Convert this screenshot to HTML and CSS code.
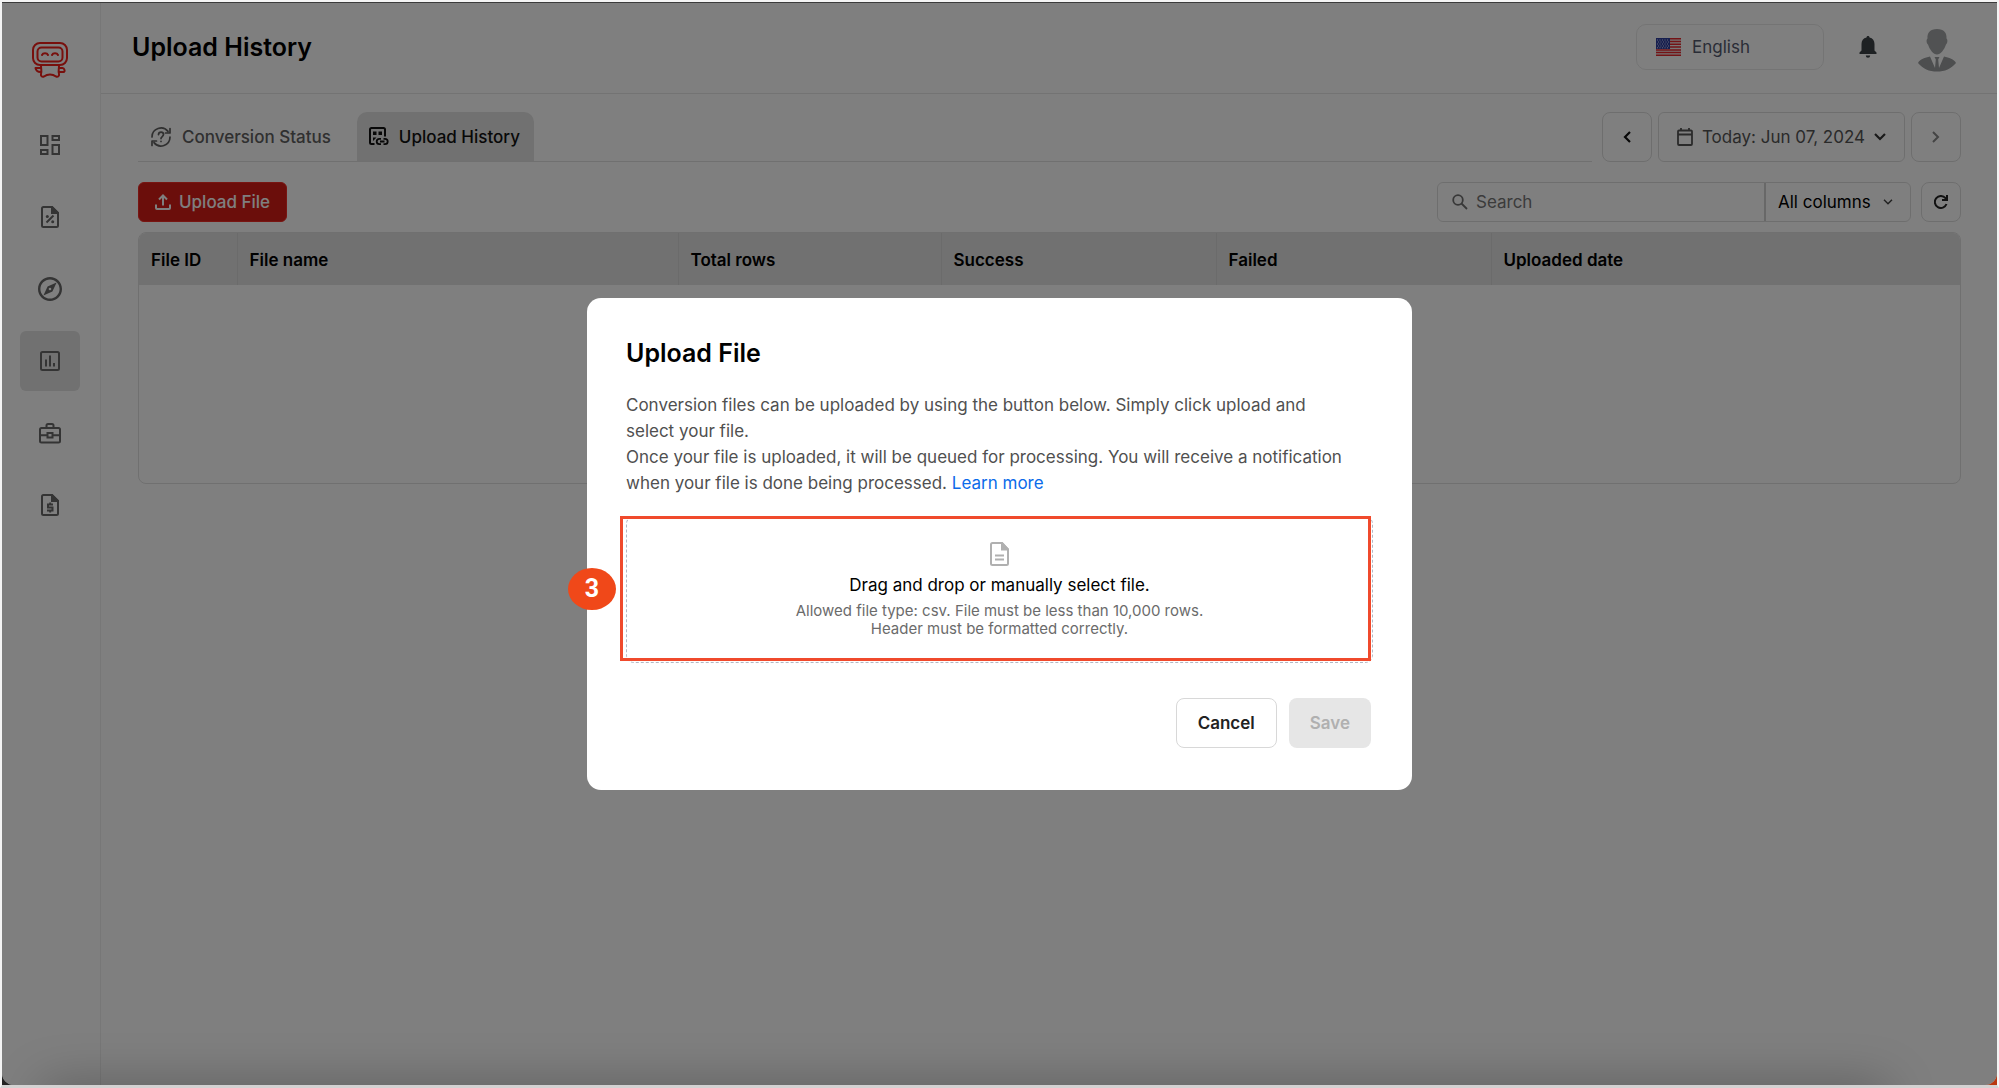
FILE: index.html
```html
<!DOCTYPE html>
<html lang="en">
<head>
<meta charset="utf-8">
<title>Upload History</title>
<link rel="stylesheet" href="styles.css">
</head>
<body>
<div class="frame">
<div class="app">
  <nav class="sidebar" aria-label="Main">
    <a class="logo" href="#" aria-label="Home">
      <svg width="36" height="36" viewBox="0 0 36 36" fill="none" stroke="currentColor" stroke-width="2" stroke-linejoin="round" stroke-linecap="round">
        <rect x="1" y="1" width="34" height="22" rx="7"/><rect x="5.500" y="5.500" width="25" height="14" rx="4"/>
        <path d="M10 13c1-2.300 5-2.300 6 0M20 13c1-2.300 5-2.300 6 0M9 23.500c0 4 1 6 0 8.500-.5 2 1 3 3 2.500 2-1.500 3-2 6-2s4 .5 6 2c2 .5 3.500-.5 3-2.500-1-2.500 0-4.500 0-8.500M8.500 26H3.500c.5 2.500 2 4 5 4M27.500 26l3 0c2 0 3 4 1 4h-4"/>
      </svg>
    </a>
    <a class="nav-item" href="#" aria-label="Dashboard"><svg width="20" height="20" viewBox="0 0 20 20" fill="none" stroke="currentColor" stroke-width="2"><path d="M1 1h6.500v9H1zM12.500 1H19v4h-6.500zM12.500 10H19v9h-6.500zM1 15h6.500v4H1z"/></svg></a>
    <a class="nav-item" href="#" aria-label="Offers"><svg width="18" height="22" viewBox="0 0 18 22" fill="none" stroke="currentColor" stroke-width="2"><path d="M2.500 1H11l6 6v12.500a1.500 1.500 0 0 1-1.500 1.500h-13A1.500 1.500 0 0 1 1 19.500v-17A1.500 1.500 0 0 1 2.500 1z"/><path d="M11 1v6h6z" fill="currentColor"/><path d="M5.500 16.500l7-7"/><circle cx="6.300" cy="10.500" r="1.500" fill="currentColor" stroke="none"/><circle cx="11.700" cy="15.700" r="1.500" fill="currentColor" stroke="none"/></svg></a>
    <a class="nav-item" href="#" aria-label="Explore"><svg width="24" height="24" viewBox="0 0 24 24" fill="currentColor"><path d="M12 2c-5.520 0-10 4.480-10 10s4.480 10 10 10 10-4.480 10-10S17.520 2 12 2zm0 18c-4.410 0-8-3.590-8-8s3.590-8 8-8 8 3.590 8 8-3.590 8-8 8zM6.500 17.500l7.510-3.490L17.500 6.500 9.990 9.990 6.500 17.500zM12 10.900a1.100 1.100 0 1 1 0 2.200 1.100 1.100 0 0 1 0-2.200z" transform="translate(-2.400 -2.400) scale(1.200)"/></svg></a>
    <a class="nav-item active" href="#" aria-label="Reports" aria-current="page"><svg width="20" height="20" viewBox="0 0 20 20" fill="none" stroke="currentColor" stroke-width="2"><rect x="1" y="1" width="18" height="18" rx="1.500"/><path d="M6 8.500v7M10 4.500v11M14 12v3.500"/></svg></a>
    <a class="nav-item" href="#" aria-label="Tools"><svg width="22" height="22" viewBox="0 0 22 22" fill="none" stroke="currentColor" stroke-width="2"><rect x="1" y="6" width="20" height="14.500" rx="1.500"/><path d="M7.500 6V3.500C7.500 2.500 8 2 9 2h4c1 0 1.500.5 1.500 1.500V6M1 13.300h7.500M13.500 13.300H21M8.500 11h5v4.500h-5z"/></svg></a>
    <a class="nav-item" href="#" aria-label="Billing"><svg width="18" height="22" viewBox="0 0 18 22" fill="none" stroke="currentColor" stroke-width="2"><path d="M2.500 1H11l6 6v12.500a1.500 1.500 0 0 1-1.500 1.500h-13A1.500 1.500 0 0 1 1 19.500v-17A1.500 1.500 0 0 1 2.500 1z"/><path d="M11 1v6h6z" fill="currentColor"/><path d="M12 10.500H7v3h4.500v3H6M9.200 8.500v2M9.200 16.500v2"/></svg></a>
  </nav>

  <div class="main">
    <header class="topbar">
      <h1 class="page-title">Upload History</h1>
      <button class="language" type="button">
        <svg width="25" height="18" viewBox="0 0 25 18"><path fill="#eee" d="M0 0h25v18H0z"/><path stroke="#e8262d" stroke-width="1.500" d="M0 .7h25M0 3.500h25M0 6.300h25M0 9.100h25M0 11.900h25M0 14.600h25M0 17.300h25"/><path fill="#2f3f9e" d="M0 0h14v11H0z"/><path stroke="#cdd3ee" stroke-width="1" stroke-dasharray="1 1.500" d="M1 2h12M2 4h11M1 6h12M2 8h11M1 9.800h12"/></svg>
        English
      </button>
      <button class="bare bell" type="button" aria-label="Notifications"><svg width="18" height="22" viewBox="0 0 18 22" fill="currentColor"><path d="M9 0c1 0 1.500.7 1.500 1.600C13.800 2.300 15.500 5 15.500 8v6.500l2 2V18H.5v-1.500l2-2V8c0-3 1.700-5.700 5-6.400C7.500.7 8 0 9 0zM6.800 19.500h4.400a2.200 2.200 0 0 1-4.400 0z"/></svg></button>
      <button class="bare avatar" type="button" aria-label="Account"><svg width="40" height="44" viewBox="0 0 40 44"><path fill="#a3a5a7" d="M20 1c7 0 10 4 9.500 9.500 1.500 1 1 5-.5 6-1.500 5-5.500 10-9 10s-7.500-5-9-10c-1.500-1-2-5-.5-6C10 5 13 1 20 1z"/><path fill="#9a9c9e" d="M13 28.500L18 40l.8-8.500L17.500 29h5l-1.300 2.500L22 40l5-11.500c5 1 10 2.500 12 6.500-5 6-11 8.500-19 8.500S6 41 1 35c2-4 7-5.500 12-6.500z"/></svg></button>
    </header>

    <main class="content">
      <div class="tab-row">
        <div class="tabs" role="tablist">
          <button class="tab" type="button" role="tab" aria-selected="false">
            <svg width="22" height="22" viewBox="0 0 22 22" fill="none" stroke="currentColor" stroke-width="1.700" stroke-linecap="round" stroke-linejoin="round"><path d="M2 11a9 9 0 0 1 16-5.600M20 11a9 9 0 0 1-16 5.600M20 2.500v4.500h-4.500M2 19.500V15h4.500M8.500 8.600c.2-3.200 5-3.200 5 0 0 1.900-2.500 2-2.500 4M11 15.300v.2"/></svg>
            Conversion Status
          </button>
          <button class="tab selected" type="button" role="tab" aria-selected="true">
            <svg width="20" height="20" viewBox="0 0 20 20" fill="none" stroke="currentColor" stroke-width="2"><path d="M5.500 17H2.500A1.500 1.500 0 0 1 1 15.500v-13A1.500 1.500 0 0 1 2.500 1h12A1.500 1.500 0 0 1 16 2.500V9.500"/><path fill="currentColor" stroke="none" d="M4 4.500h3.500V8H4zM9.500 4.500H13V8H9.500zM4 10.500h3.500L4 14z"/><path d="M12 11.800h-1.600a2.700 2.700 0 0 0 0 5.400H12M14.500 11.800H16a2.700 2.700 0 0 1 0 5.400h-1.500M11 14.500h4.500" stroke-width="1.800"/></svg>
            Upload History
          </button>
        </div>
        <div class="date-nav">
          <button class="box step" type="button" aria-label="Previous day"><svg width="8" height="12" viewBox="0 0 8 12" fill="none" stroke="#111" stroke-width="2.200"><path d="M7 1L2 6l5 5"/></svg></button>
          <button class="box date" type="button">
            <svg width="16" height="18" viewBox="0 0 16 18" fill="none" stroke="currentColor" stroke-width="1.800"><rect x="1" y="2.500" width="14" height="14.500" rx="1"/><path d="M1 6.500h14M4 0v3M12 0v3"/></svg>
            Today: Jun 07, 2024
            <svg width="12" height="8" viewBox="0 0 12 8" fill="none" stroke="#333" stroke-width="2.200"><path d="M1 1l5 5 5-5"/></svg>
          </button>
          <button class="box step" type="button" aria-label="Next day"><svg width="8" height="12" viewBox="0 0 8 12" fill="none" stroke="#888" stroke-width="2"><path d="M1 1l5 5-5 5"/></svg></button>
        </div>
      </div>

      <div class="toolbar">
        <button class="upload" type="button">
          <svg width="16" height="16" viewBox="0 0 16 16" fill="none" stroke="currentColor" stroke-width="2"><path d="M8 11.500V2M4 5.500l4-4 4 4M1 10.500V14a1 1 0 0 0 1 1h12a1 1 0 0 0 1-1v-3.500"/></svg>
          Upload File
        </button>
        <div class="filters">
          <div class="search-group">
            <label class="search">
              <svg width="16" height="16" viewBox="0 0 16 16" fill="none" stroke="currentColor" stroke-width="1.800"><circle cx="6" cy="6" r="4.800"/><path d="M9.500 9.500l5.500 5.500"/></svg>
              <input type="text" placeholder="Search" aria-label="Search">
            </label>
            <label class="columns">
              <select aria-label="Columns to search"><option>All columns</option></select>
              <svg width="10" height="6" viewBox="0 0 10 6" fill="none" stroke="#444" stroke-width="1.500"><path d="M1 .8l4 4 4-4"/></svg>
            </label>
          </div>
          <button class="box refresh" type="button" aria-label="Refresh"><svg width="14" height="14" viewBox="0 0 14 14" fill="none" stroke="#222" stroke-width="2"><path d="M12.500 9A6 6 0 1 1 11.500 3.200l1.300 1.600M13 0v5H8"/></svg></button>
        </div>
      </div>

      <div class="table-card">
        <table class="files">
          <colgroup><col class="c-id"><col class="c-name"><col class="c-total"><col class="c-count"><col class="c-count"><col></colgroup>
          <thead><tr><th>File ID</th><th>File name</th><th>Total rows</th><th>Success</th><th>Failed</th><th>Uploaded date</th></tr></thead>
        </table>
      </div>
    </main>
  </div>
</div>

<div class="scrim">
  <section class="dialog" role="dialog" aria-modal="true" aria-labelledby="dialog-title">
    <h2 class="dialog-title" id="dialog-title">Upload File</h2>
    <p class="dialog-text">Conversion files can be uploaded by using the button below. Simply click upload and select your file.<br>Once your file is uploaded, it will be queued for processing. You will receive a notification when your file is done being processed. <a href="#">Learn more</a></p>
    <div class="drop-area">
      <button class="dropzone" type="button">
        <svg width="19" height="24" viewBox="0 0 19 24" fill="none" stroke="#b0b0b0" stroke-width="2"><path d="M2.500 1H12l6 6.500v14a1.500 1.500 0 0 1-1.500 1.500h-14A1.500 1.500 0 0 1 1 21.500v-19A1.500 1.500 0 0 1 2.500 1z"/><path d="M12 1v6.500h6z" fill="#b0b0b0"/><path d="M5 13.500h9M5 17.500h9"/></svg>
        <span class="drop-title">Drag and drop or manually select file.</span>
        <span class="drop-hint">Allowed file type: csv. File must be less than 10,000 rows.<br>Header must be formatted correctly.</span>
      </button>
      <div class="marker"></div>
      <div class="step-number">3</div>
    </div>
    <div class="actions">
      <button class="cancel" type="button">Cancel</button>
      <button class="save" type="button" disabled>Save</button>
    </div>
  </section>
</div>
</div>
</body>
</html>
```
FILE: styles.css
```css
* { box-sizing: border-box; }
body { margin: 0; background: #f4f4f4; font-family: Inter, "Liberation Sans", sans-serif; font-size: 17px; color: #000; }
button, input, select { font: inherit; color: inherit; margin: 0; }
button { display: flex; align-items: center; background: none; border: 0; padding: 0; }
svg { display: block; flex: none; }

.frame { position: relative; height: 100vh; border: 2px solid #f4f4f4; border-bottom: 3px solid #d4d2d2; background: linear-gradient(90deg, #222 50%, #b8380f 50%); }
.app { display: flex; height: 100%; background: #fff; border-top: 1px solid #777; border-radius: 0 0 12px 12px; overflow: hidden; }

.sidebar { flex: none; width: 99px; border-right: 1px solid #efefef; padding: 39px 2px 0 0; display: flex; flex-direction: column; align-items: center; gap: 12px; color: #686868; }
.logo { height: 61px; color: #f0201a; }
.nav-item { width: 60px; height: 60px; border-radius: 6px; display: flex; align-items: center; justify-content: center; color: inherit; }
.nav-item.active { background: #e2e2e2; }

.main { flex: 1; min-width: 0; }
.topbar { display: flex; align-items: center; height: 91px; padding: 0 40px 2px 31px; border-bottom: 1px solid #e6e6e6; }
.page-title { flex: 1; margin: 0; font-size: 25px; font-weight: 600; line-height: 32px; }
.language { width: 188px; height: 46px; padding-left: 19px; gap: 11px; border: 1px solid #e8e8e8; border-radius: 10px; color: #555a6e; }
.bell { margin-left: 35px; color: #3c4246; }
.avatar { margin: 6px 0 0 40px; }

.content { padding: 18px 36px 0 37px; }
.tab-row { display: flex; gap: 10px; }
.tabs { flex: 1; display: flex; gap: 12px; border-bottom: 1px solid #e0e0e0; }
.tab { height: 49px; padding: 0 14px 0 12px; gap: 10px; font-weight: 500; color: #606060; border-radius: 10px 10px 0 0; }
.tab.selected { background: #e2e2e2; color: #111; }
.date-nav { display: flex; gap: 6px; }
.box { justify-content: center; border: 1px solid #ddd; border-radius: 8px; }
.step { width: 50px; height: 50px; }
.date { width: 247px; height: 50px; gap: 9px; color: #555; border-radius: 6px; }

.toolbar { display: flex; justify-content: space-between; margin: 20px 0 10px; }
.upload { height: 40px; padding: 0 16px; gap: 8px; border: 1px solid #f02a24; border-radius: 6px; background: #d61d17; color: #fff; font-weight: 500; }
.filters { display: flex; gap: 10px; }
.search-group { display: flex; border: 1px solid #ddd; border-radius: 6px; height: 40px; }
.search { display: flex; align-items: center; gap: 8px; width: 328px; padding-left: 14px; border-right: 2px solid #d0d0d0; color: #707070; }
.search input { flex: 1; min-width: 0; border: 0; padding: 0; background: none; outline: 0; }
.search input::placeholder { color: #777; opacity: 1; }
.columns { display: flex; align-items: center; padding: 0 17px 0 12px; gap: 12px; }
.columns select { appearance: none; border: 0; padding: 0; background: none; color: #000; }
.refresh { width: 40px; height: 40px; }

.table-card { border: 1px solid #e0e0e0; border-radius: 8px; min-height: 252px; overflow: hidden; }
.files { width: 100%; table-layout: fixed; border-collapse: collapse; }
.files th { height: 52px; padding: 2px 12px 0; text-align: left; font-weight: 600; background: #e2e2e2; border-right: 1px solid #d6d6d6; }
.files th:last-child { border-right: 0; }
.c-id { width: 98px; }
.c-name { width: 441px; }
.c-total { width: 263px; }
.c-count { width: 275px; }

.scrim { position: absolute; inset: 0; display: flex; align-items: center; justify-content: center; border-radius: 0 0 12px 12px; background: rgba(0,0,0,.5); overflow: hidden; }
.scrim::after { content: ""; position: absolute; left: 40px; right: 110px; top: 100%; height: 40px; box-shadow: 0 0 50px rgba(0,0,0,.28); }
.dialog { width: 825px; padding: 39px 39px 42px; border-radius: 14px; background: #fff; }
.dialog-title { margin: 0 0 23px; font-size: 25px; font-weight: 600; line-height: 32px; }
.dialog-text { margin: 0 0 20px; padding-right: 20px; line-height: 26px; color: #505050; }
.dialog-text a { color: #0b6bea; text-decoration: none; }
.drop-area { position: relative; }
.dropzone { flex-direction: column; width: 100%; height: 147px; padding-top: 25px; border: 1px dashed #b4b8c4; border-radius: 8px; }
.drop-title { margin-top: 7px; line-height: 24px; }
.drop-hint { margin-top: 5px; font-size: 15px; line-height: 18px; text-align: center; color: #6b6b6b; }
.marker { position: absolute; inset: 0 2px 2px -6px; border: 3px solid #f04a2c; }
.step-number { position: absolute; left: -58px; top: 52px; width: 48px; height: 42px; border-radius: 50%; background: #f04819; color: #fff; font: 700 25px/42px Roboto, "Liberation Sans", sans-serif; text-align: center; }
.actions { display: flex; justify-content: flex-end; gap: 12px; margin-top: 35px; padding-right: 2px; }
.actions button { height: 50px; padding: 0 21px; border-radius: 8px; font-weight: 600; }
.cancel { border: 1px solid #d8d8d8; color: #222; }
.save { background: #e6e6e6; color: #b0b0b0; }
```
